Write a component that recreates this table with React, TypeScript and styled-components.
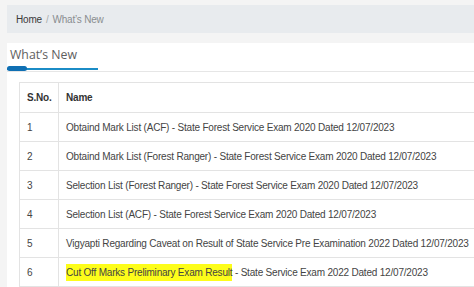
import React from "react";
import styled, { createGlobalStyle } from "styled-components";

const Global = createGlobalStyle`
  html, body { margin: 0; padding: 0; }
  body {
    background: #f4f4f4;
    font-family: "Liberation Sans", Arial, sans-serif;
    overflow: hidden;
  }
`;

const Page = styled.div`
  padding: 5px 0 0 7px;
  width: 520px;
`;

const Breadcrumb = styled.nav`
  display: flex;
  align-items: center;
  gap: 4px;
  height: 28px;
  padding-left: 9px;
  background: #e8ebee;
  font-size: 10px;
  letter-spacing: -0.2px;
`;

const Crumb = styled.span<{ $active?: boolean }>`
  color: ${(p) => (p.$active ? "#8a8d90" : "#3a3a3a")};
`;

const Sep = styled.span`
  color: #a8abad;
`;

const Card = styled.section`
  margin-top: 10px;
  background: #fff;
  padding-bottom: 20px;
`;

const Head = styled.div`
  position: relative;
  height: 28px;
  border-bottom: 1px solid #e6e6e6;
`;

const Title = styled.h2`
  margin: 0;
  padding: 4px 0 0 3px;
  font-size: 12.3px;
  font-weight: 400;
  color: #5e5e5e;
  line-height: 16px;
  font-family: "Open Sans", "Liberation Sans", sans-serif;
`;

const Line = styled.div`
  position: absolute;
  left: 0;
  top: 25px;
  width: 91px;
  height: 2px;
  background: #1b8cc6;
`;

const Pill = styled.div`
  position: absolute;
  left: 0;
  top: 23px;
  width: 20px;
  height: 5px;
  border-radius: 3px;
  background: #0f6fb3;
`;

const Table = styled.table`
  margin: 10px 0 0 12px;
  border-collapse: collapse;
  table-layout: fixed;
  width: 500px;
  font-size: 10px;
  letter-spacing: -0.2px;
  color: #444;
`;

const Th = styled.th`
  text-align: left;
  font-weight: 700;
  color: #333;
  height: 29px;
  padding: 0 7px;
  border: 1px solid #e3e3e3;
`;

const Td = styled.td`
  height: 28px;
  padding: 0 7px;
  border: 1px solid #e3e3e3;
  white-space: nowrap;
`;

const NumCol = styled.col`
  width: 39px;
`;

const Mark = styled.span`
  background: #fdfd1a;
  padding: 3px 0;
`;

const rows: { name: React.ReactNode }[] = [
  { name: "Obtaind Mark List (ACF) - State Forest Service Exam 2020 Dated 12/07/2023" },
  { name: "Obtaind Mark List (Forest Ranger) - State Forest Service Exam 2020 Dated 12/07/2023" },
  { name: "Selection List (Forest Ranger) - State Forest Service Exam 2020 Dated 12/07/2023" },
  { name: "Selection List (ACF) - State Forest Service Exam 2020 Dated 12/07/2023" },
  { name: "Vigyapti Regarding Caveat on Result of State Service Pre Examination 2022 Dated 12/07/2023" },
  {
    name: (
      <>
        <Mark>Cut Off Marks Preliminary Exam Result</Mark> - State Service Exam 2022 Dated 12/07/2023
      </>
    ),
  },
];

export default function App() {
  return (
    <>
      <Global />
      <Page>
        <Breadcrumb>
          <Crumb>Home</Crumb>
          <Sep>/</Sep>
          <Crumb $active>What’s New</Crumb>
        </Breadcrumb>
        <Card>
          <Head>
            <Title>What’s New</Title>
            <Line />
            <Pill />
          </Head>
          <Table>
            <colgroup>
              <NumCol />
              <col />
            </colgroup>
            <thead>
              <tr>
                <Th>S.No.</Th>
                <Th>Name</Th>
              </tr>
            </thead>
            <tbody>
              {rows.map((r, i) => (
                <tr key={i}>
                  <Td>{i + 1}</Td>
                  <Td>{r.name}</Td>
                </tr>
              ))}
            </tbody>
          </Table>
        </Card>
      </Page>
    </>
  );
}
